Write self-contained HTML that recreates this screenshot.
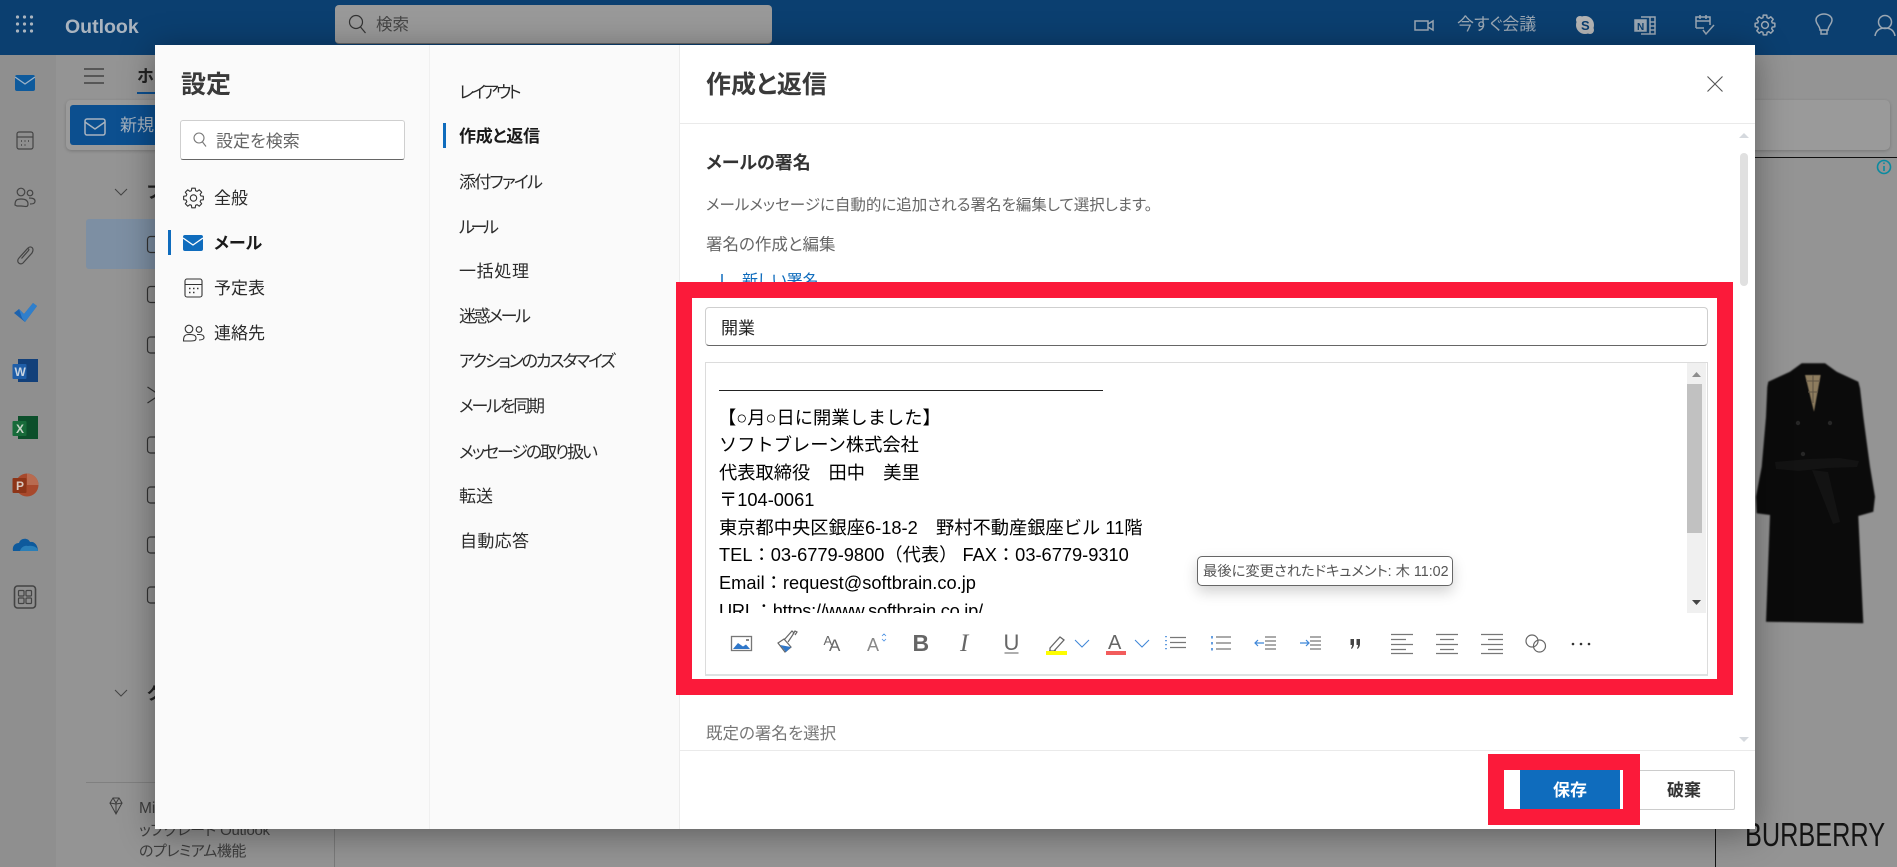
<!DOCTYPE html>
<html lang="ja"><head><meta charset="utf-8"><title>Outlook 設定</title>
<style>
html,body{margin:0;padding:0;width:1897px;height:867px;overflow:hidden;background:#949494}
body{position:relative;font-family:"Liberation Sans","Noto Sans CJK JP",sans-serif;font-feature-settings:"palt";-webkit-font-smoothing:antialiased}
.a{position:absolute}
.t{position:absolute;white-space:nowrap;line-height:24px;margin-top:1px}
svg{position:absolute;left:0;top:0}
.l1{font-size:17px;color:#2b2b2b;left:214px}
.e{position:absolute;left:0;white-space:nowrap;font-size:18.25px;line-height:24px;color:#000;font-feature-settings:normal;margin-top:1px}
.n{font-size:17px;fill:#2b2b2b}
.nb{font-size:17px;fill:#1a1a1a;font-weight:bold}
</style></head><body>

<!-- dimmed background app -->
<div class="a" style="left:0;top:0;width:1897px;height:55px;background:#0b3f70"></div>
<div class="a" style="left:0;top:55px;width:56px;height:812px;background:#8f8f8f"></div>
<div class="a" style="left:334px;top:55px;width:1px;height:812px;background:#7a7a7a"></div>
<div class="a" style="left:335px;top:5px;width:437px;height:39px;background:#999;border-radius:4px;border-bottom:1px solid #666;box-sizing:border-box"></div>
<div class="t" style="left:376px;top:12px;font-size:16.5px;color:#454545">検索</div>
<div class="t" style="left:65px;top:14px;font-size:19.5px;font-weight:bold;color:#aab4bf">Outlook</div>
<div class="t" style="left:1457px;top:12px;font-size:17px;color:#9ba7b3">今すぐ会議</div>
<div class="a" style="left:66px;top:100px;width:1824px;height:50px;background:#9a9a9a;border-radius:5px;box-shadow:0 1px 3px rgba(0,0,0,.2)"></div>
<div class="a" style="left:70px;top:105px;width:100px;height:40px;background:#0c4f8f;border-radius:3px"></div>
<div class="t" style="left:120px;top:113px;font-size:17px;color:#a9b4c0">新規</div>
<div class="t" style="left:137px;top:64px;font-size:17px;font-weight:bold;color:#222;">ホーム</div>
<div class="a" style="left:137px;top:92px;width:40px;height:2px;background:#0c4f8f"></div>
<div class="t" style="left:147px;top:180px;font-size:17px;font-weight:bold;color:#222">フォルダー</div>
<div class="t" style="left:147px;top:681px;font-size:17px;font-weight:bold;color:#222">グループ</div>
<div class="a" style="left:86px;top:219px;width:100px;height:50px;background:#7d8fa3;border-radius:3px"></div>
<div class="a" style="left:86px;top:782px;width:248px;height:1px;background:#808080"></div>
<div class="t" style="left:139px;top:796px;font-size:15.5px;color:#3d3d3d">Microsoft 365 にア</div>
<div class="t" style="left:139px;top:818px;font-size:15px;letter-spacing:-.3px;color:#3d3d3d">ップグレード Outlook</div>
<div class="t" style="left:139px;top:839px;font-size:15px;letter-spacing:-.5px;color:#3d3d3d">のプレミアム機能</div>
<div class="a" style="left:1755px;top:157px;width:142px;height:1px;background:#111"></div>
<div class="a" style="left:1715px;top:800px;width:1px;height:67px;background:#111"></div>
<div class="t" style="left:1745px;top:818px;margin:0;font-family:'Liberation Sans',sans-serif;font-size:33.5px;line-height:36px;color:#141414;transform:scaleX(.755);transform-origin:0 0">BURBERRY</div>

<svg width="1897" height="867" viewBox="0 0 1897 867" fill="none">
 <!-- app launcher -->
 <g fill="#aab4bf"><circle cx="17.5" cy="17" r="1.6"/><circle cx="24.5" cy="17" r="1.6"/><circle cx="31.5" cy="17" r="1.6"/><circle cx="17.5" cy="24" r="1.6"/><circle cx="24.5" cy="24" r="1.6"/><circle cx="31.5" cy="24" r="1.6"/><circle cx="17.5" cy="31" r="1.6"/><circle cx="24.5" cy="31" r="1.6"/><circle cx="31.5" cy="31" r="1.6"/></g>
 <!-- search -->
 <circle cx="356" cy="22" r="6.5" stroke="#333" stroke-width="1.2"/><path d="M360.5 27l5 6" stroke="#333" stroke-width="1.2"/>
 <!-- top right icons -->
 <g stroke="#9ba7b3" stroke-width="1.5">
  <rect x="1415" y="21" width="13" height="9"/><path d="M1428 24l5-3v9l-5-3"/>
  <path d="M1641 17h14v17h-14M1650 17v17M1650 22h5M1650 26h5M1650 30h5"/>
  <rect x="1635" y="20" width="11" height="11" fill="#9ba7b3"/>
  <path d="M1696 28v-11h14v8M1696 28h8M1700 15v4M1706 15v4M1696 21h14M1703 30l3 4 8-9"/>
  <circle cx="1765" cy="25" r="3.4"/>
  <path transform="translate(1765 25)" d="M-2.09-7.31L-1.74-9.85H1.74L2.09-7.31L3.68-6.65L5.74-8.19L8.19-5.74L6.65-3.68L7.31-2.09L9.85-1.74V1.74L7.31 2.09L6.65 3.68L8.19 5.74L5.74 8.19L3.68 6.65L2.09 7.31L1.74 9.85H-1.74L-2.09 7.31L-3.68 6.65L-5.74 8.19L-8.19 5.74L-6.65 3.68L-7.31 2.09L-9.85 1.74V-1.74L-7.31-2.09L-6.65-3.68L-8.19-5.74L-5.74-8.19L-3.68-6.65Z" stroke-linejoin="round"/>
  <path d="M1820 30c0-4-4-6-4-10a8 6 0 0 1 16 0c0 4-4 6-4 10zM1821 30v4h6v-4"/>
  <circle cx="1885" cy="22" r="6.5"/><path d="M1875 36c1-6 5-8 10-8s9 2 10 8"/>
 </g>
 <circle cx="1585" cy="25" r="9" fill="#b4b4b4"/><circle cx="1580" cy="20" r="4" fill="#b4b4b4"/><circle cx="1590" cy="30" r="4" fill="#b4b4b4"/>
 <text x="1581" y="30" font-size="13" font-weight="bold" fill="#0b3f70" font-family="Liberation Sans">S</text>
 <text x="1637" y="30" font-size="10" font-weight="bold" fill="#0b3f70" font-family="Liberation Sans">N</text>

 <!-- rail -->
 <rect x="15" y="75" width="20" height="16" rx="2" fill="#0e5a9c"/><path d="M15 77l10 7 10-7" stroke="#9db3c8" stroke-width="1.3"/>
 <g stroke="#444" stroke-width="1.2">
  <rect x="17" y="132" width="16" height="17" rx="2"/><path d="M17 137h16"/>
  <path d="M21 141h1M24.5 141h1M28 141h1M21 145h1M24.5 145h1" stroke-width="1.6"/>
  <circle cx="21" cy="192" r="3.8"/><circle cx="30" cy="193" r="2.8"/><path d="M15 205c0-5 2-6 6-6s7 1 7 5-3 2-7 2h-4zM29 198c4 0 6 1 6 3 0 3-3 3-5 3"/>
  <path d="M19 258l9-10c2-2 5-1 5 2 0 1-.5 2-1 3l-9 10c-1.500 1.500-4 1-5-1-.5-1.500 0-3 1-4l8-9c1-1 2.500 0 1.500 1.500l-7 8"/>
  <rect x="14.500" y="586" width="21" height="22" rx="3" stroke-width="1.6"/>
  <rect x="18.500" y="590.500" width="5.500" height="5.500" rx="1"/><rect x="26" y="590.500" width="5.500" height="5.500" rx="1"/><rect x="18.500" y="598" width="5.500" height="5.500" rx="1"/><rect x="26" y="598" width="5.500" height="5.500" rx="1"/>
 </g>
 <path d="M14 313l5-4 5 5 9-11 4 3-12 16z" fill="#1d62ad"/><path d="M19 309l5 5 9-11 4 3-12 16-3-4z" fill="#2f7fcc"/>
 <rect x="18" y="359" width="20" height="23" fill="#12407a"/><rect x="12.500" y="364" width="14" height="15" rx="1" fill="#1f5ea8"/><text x="14.500" y="376" font-size="12" font-weight="bold" fill="#c8d4e0" font-family="Liberation Sans">W</text>
 <rect x="18" y="416" width="20" height="23" fill="#0c4f2b"/><rect x="12.500" y="421" width="14" height="15" rx="1" fill="#176b3a"/><text x="16" y="433" font-size="12" font-weight="bold" fill="#c8d4c8" font-family="Liberation Sans">X</text>
 <circle cx="27" cy="485" r="11.500" fill="#a8492c"/><path d="M27 485v-11.500a11.500 11.500 0 0 1 11.500 11.500z" fill="#b86b50"/><rect x="12.500" y="478" width="14" height="15" rx="1" fill="#8d3518"/><text x="16" y="490" font-size="12" font-weight="bold" fill="#d8c8c0" font-family="Liberation Sans">P</text>
 <path d="M13 551c-1-6 3-8 6-8 1-5 9-6 11-1 4-1 8 3 8 9z" fill="#0e5a9c"/><path d="M20 551c1-4 5-6 8-5 4-1 10 1 10 5z" fill="#2a7fb8"/>

 <!-- nav -->
 <path d="M84 69h20M84 76h20M84 83h20" stroke="#333" stroke-width="1.200"/>
 <rect x="85" y="119" width="20" height="16" rx="2" stroke="#a9b4c0" stroke-width="1.500"/><path d="M85 122l10 7 10-7" stroke="#a9b4c0" stroke-width="1.500"/>
 <path d="M115 189l6 6 6-6M115 690l6 6 6-6" stroke="#444" stroke-width="1"/>
 <path d="M116 803l-6-1 3-5h6l3 5-6 1zM110 802l6 11 6-11M116 803v10M113 797l3 5 3-5" stroke="#3d3d3d" stroke-width="1" transform="translate(0 1)"/>
 <g stroke="#333" stroke-width="1.200">
  <rect x="147.500" y="236.500" width="20" height="16" rx="3"/><rect x="147.500" y="286.500" width="20" height="16" rx="3"/><rect x="147.500" y="337" width="20" height="16" rx="3"/><path d="M147.500 387l12 8-12 8"/><rect x="147.500" y="437" width="20" height="16" rx="3"/><rect x="147.500" y="487" width="20" height="16" rx="3"/><rect x="147.500" y="537" width="20" height="16" rx="3"/><rect x="147.500" y="587" width="20" height="16" rx="3"/>
 </g>
 <!-- info + coat (outside modal) -->
 <circle cx="1884" cy="167" r="6.500" stroke="#0a8aa0" stroke-width="1.600"/><path d="M1884 166v5M1884 162.500v1.500" stroke="#0a8aa0" stroke-width="1.600"/>
 <path d="M1790 371.700L1801.700 363.300L1825 363.300L1836.700 371.700L1858.300 381.700L1860 388.300L1863.300 416.700L1870 466.700L1875 496.700L1873.300 511.700L1858.300 516L1863.300 623.300L1766 621.700L1770 515L1756.700 513.300L1756 496.700L1761.700 466.700L1766 416.700L1767.300 386.700L1768.300 381.700Z" fill="#0b0b0b" style="filter:blur(.8px)"/>
 <path d="M1805 375h15.700l-6.700 36.700z" fill="#8d7c5e" style="filter:blur(.5px)"/>
 <path d="M1806 381h14M1808 392h10M1813 375v28" stroke="#5f5444" stroke-width="1"/>
 <path d="M1775 462l34-3 30-1 20 3-2 6-30 1-28 3-23-2zM1812 470l16 2 12 50-7 2z" fill="#131313"/>
 <g fill="#262626"><circle cx="1798" cy="423" r="2.200"/><circle cx="1830" cy="423" r="2.200"/><circle cx="1803" cy="454" r="2.200"/></g>
</svg>

<!-- modal -->
<div class="a" style="left:155px;top:45px;width:1600px;height:784px;background:#fff;box-shadow:0 5px 32px rgba(0,0,0,.38)"></div>
<div class="a" style="left:155px;top:45px;width:525px;height:784px;background:#fafafa"></div>
<div class="a" style="left:429px;top:45px;width:1px;height:784px;background:#f0f0f0"></div>
<div class="a" style="left:679px;top:45px;width:1px;height:784px;background:#ececec"></div>
<div class="a" style="left:680px;top:123px;width:1075px;height:1px;background:#eaeaea"></div>
<div class="a" style="left:680px;top:750px;width:1075px;height:1px;background:#eaeaea"></div>

<!-- col 1 -->
<div class="t" style="left:181px;top:72px;font-size:25px;font-weight:bold;color:#3a3a3a;">設定</div>
<div class="a" style="left:180px;top:120px;width:225px;height:40px;box-sizing:border-box;background:#fff;border:1px solid #cfcfcf;border-bottom:1px solid #666;border-radius:3px"></div>
<div class="t" style="left:216px;top:129px;font-size:17px;color:#666">設定を検索</div>
<div class="t l1" style="top:186px">全般</div>
<div class="t l1" style="top:231px;font-weight:bold;color:#1a1a1a">メール</div>
<div class="t l1" style="top:276px">予定表</div>
<div class="t l1" style="top:321px">連絡先</div>
<div class="a" style="left:168px;top:230px;width:3px;height:25px;background:#0f6cbd"></div>

<!-- col 2 -->
<div class="a" style="left:443px;top:123px;width:3px;height:25px;background:#0f6cbd"></div>
<svg width="1897" height="867" viewBox="0 0 1897 867">
 <text class="n" x="459" y="98" textLength="62.500">レイアウト</text>
 <text class="nb" x="459" y="142" textLength="81">作成と返信</text>
 <text class="n" x="459" y="188" textLength="84">添付ファイル</text>
 <text class="n" x="459" y="233" textLength="40">ルール</text>
 <text class="n" x="459" y="277" textLength="70">一括処理</text>
 <text class="n" x="459" y="322" textLength="72">迷惑メール</text>
 <text class="n" x="459" y="367" textLength="157">アクションのカスタマイズ</text>
 <text class="n" x="459" y="412" textLength="86">メールを同期</text>
 <text class="n" x="459" y="458" textLength="139">メッセージの取り扱い</text>
 <text class="n" x="459" y="502" textLength="34">転送</text>
 <text class="n" x="460" y="547" textLength="69">自動応答</text>
</svg>

<!-- right pane -->
<div class="t" style="left:706px;top:72px;font-size:25px;font-weight:bold;color:#3a3a3a">作成と返信</div>
<div class="t" style="left:706px;top:150px;font-size:18px;font-weight:bold;color:#333">メールの署名</div>
<div class="t" style="left:706px;top:193px;font-size:15.500px;color:#666">メールメッセージに自動的に追加される署名を編集して選択します。</div>
<div class="t" style="left:706px;top:232px;font-size:16.500px;color:#666">署名の作成と編集</div>
<div class="t" style="left:742px;top:269px;font-size:16px;color:#0f6cbd">新しい署名</div>
<div class="t" style="left:706px;top:721px;font-size:16.500px;color:#777">既定の署名を選択</div>

<!-- red big box -->
<div class="a" style="left:676px;top:282px;width:1057px;height:413px;box-sizing:border-box;background:#fff;border:16px solid #fb1a3a"></div>
<!-- name input -->
<div class="a" style="left:705px;top:307px;width:1003px;height:39px;box-sizing:border-box;border:1px solid #cfcfcf;border-bottom:1px solid #666;border-radius:4px;background:#fff"></div>
<div class="t" style="left:721px;top:316px;font-size:17px;color:#222">開業</div>
<!-- editor -->
<div class="a" style="left:705px;top:362px;width:1003px;height:314px;box-sizing:border-box;border:1px solid #dcdcdc;border-bottom:2px solid #dde2e2;background:#fff"></div>
<div class="a" style="left:1687px;top:363px;width:19px;height:250px;background:#f0f0f0"></div>
<div class="a" style="left:1687px;top:384px;width:15px;height:149px;background:#c1c1c1"></div>
<div class="a" style="left:719px;top:363px;width:950px;height:250px;overflow:hidden">
 <div class="a" style="left:0;top:27px;width:384px;height:1px;background:#222"></div>
 <div class="e" style="top:42px;left:-1px">【○月○日に開業しました】</div>
 <div class="e" style="top:69px">ソフトブレーン株式会社</div>
 <div class="e" style="top:97px">代表取締役　田中　美里</div>
 <div class="e" style="top:124px">〒104-0061</div>
 <div class="e" style="top:152px">東京都中央区銀座6-18-2　野村不動産銀座ビル 11階</div>
 <div class="e" style="top:179px">TEL：03-6779-9800（代表） FAX：03-6779-9310</div>
 <div class="e" style="top:207px">Email：request@softbrain.co.jp</div>
 <div class="e" style="top:235px;letter-spacing:-.25px">URL：https://www.softbrain.co.jp/</div>
</div>
<!-- tooltip -->
<div class="a" style="left:1197px;top:556px;width:256px;height:30px;box-sizing:border-box;background:#fff;border:1px solid #666;border-radius:5px;box-shadow:0 6px 14px rgba(0,0,0,.18)"></div>
<div class="t" style="left:1203px;top:559px;font-size:14.300px;color:#555">最後に変更されたドキュメント: 木 11:02</div>

<!-- red save box -->
<div class="a" style="left:1488px;top:754px;width:152px;height:71px;background:#fb1a3a"></div>
<div class="a" style="left:1504px;top:770px;width:119px;height:39px;background:#fff"></div>
<div class="a" style="left:1520px;top:770px;width:100px;height:39px;background:#0f6cbd"></div>
<div class="t" style="left:1553px;top:778px;font-size:17px;font-weight:bold;color:#fff">保存</div>
<div class="a" style="left:1640px;top:770px;width:95px;height:40px;box-sizing:border-box;border:1px solid #ccc;border-left:none;border-radius:0 2px 2px 0;background:#fff"></div>
<div class="t" style="left:1667px;top:778px;font-size:17px;font-weight:bold;color:#333">破棄</div>

<!-- modal icons -->
<svg width="1897" height="867" viewBox="0 0 1897 867" fill="none">
 <!-- search settings -->
 <circle cx="199" cy="138" r="5" stroke="#777" stroke-width="1.100"/><path d="M202.500 142l3.500 4.500" stroke="#777" stroke-width="1.100"/>
 <!-- gear general -->
 <g stroke="#333" stroke-width="1.100">
  <circle cx="193.500" cy="198" r="3.200"/>
  <path transform="translate(193.500 198)" d="M-2.09-7.31L-1.74-9.85H1.74L2.09-7.31L3.68-6.65L5.74-8.19L8.19-5.74L6.65-3.68L7.31-2.09L9.85-1.74V1.74L7.31 2.09L6.65 3.68L8.19 5.74L5.74 8.19L3.68 6.65L2.09 7.31L1.74 9.85H-1.74L-2.09 7.31L-3.68 6.65L-5.74 8.19L-8.19 5.74L-6.65 3.68L-7.31 2.09L-9.85 1.74V-1.74L-7.31-2.09L-6.65-3.68L-8.19-5.74L-5.74-8.19L-3.68-6.65Z" stroke-linejoin="round"/>
  <rect x="185" y="279" width="17" height="18" rx="2"/><path d="M185 284.500h17"/>
  <path d="M189 288.500h1.500M193 288.500h1.500M197 288.500h1.500M189 292.500h1.500M193 292.500h1.500" stroke-width="1.500"/>
  <circle cx="189" cy="329" r="3.800"/><circle cx="199" cy="329.500" r="2.800"/><path d="M183.500 341c0-5 1.500-6.500 5.500-6.500s7 .5 7 3.500-2 3-7 3zM197 334.500h2c4 0 5 1.500 5 3s-2 2.500-5 2.500"/>
 </g>
 <rect x="183" y="235" width="20" height="16" rx="2" fill="#0f6cbd"/><path d="M183 238l10 7 10-7" stroke="#fff" stroke-width="1.300"/>
 <!-- close -->
 <path d="M1707.500 76.500l15 15M1722.500 76.500l-15 15" stroke="#555" stroke-width="1.100"/>
 <!-- outer scrollbar -->
 <path d="M1739 138l5-5 5 5z" fill="#d5d9de"/><path d="M1739 737l5 5 5-5z" fill="#d5d9de"/>
 <rect x="1740" y="153" width="8" height="133" rx="4" fill="#e0e0e0"/>
 <!-- plus new sig -->
 <path d="M722 274v8" stroke="#0f6cbd" stroke-width="1.500"/>
 <!-- editor scroll arrows -->
 <path d="M1692 377l4.500-5 4.500 5z" fill="#8e8e8e"/><path d="M1692 600l4.500 5 4.500-5z" fill="#444"/>
 <!-- toolbar -->
 <rect x="731.500" y="636.500" width="20" height="14" stroke="#777" stroke-width="1.300"/>
 <path d="M733 649l5-6 5 3.500 3-2 4 4.500z" fill="#2f77c9"/>
 <path d="M746 639h3v2h-3z" fill="#888"/>
 <g stroke="#666" stroke-width="1.200">
  <path d="M778 643l7 9 6-5-7-8zM784 640l8-9 2 2-6 9"/><path d="M793 634l2-3 2 1-2 3"/>
 </g>
 <path d="M780 645l11 2-5 5z" fill="#2f77c9"/>
 <g font-family="Liberation Sans" fill="#666">
  <text x="823.500" y="645" font-size="13">A</text><text x="829" y="651" font-size="17">A</text>
  <text x="867" y="651" font-size="18" fill="#888">A</text>
  <text x="912.500" y="651" font-size="23" font-weight="bold">B</text>
  <text x="960" y="651" font-size="25" font-style="italic" font-family="Liberation Serif">I</text>
  <text x="1003.500" y="650" font-size="22">U</text>
  <text x="1108" y="649" font-size="20">A</text>
 </g>
 <path d="M882 636l2-2 2 2M882 639l2 2 2-2" stroke="#4a90e2" stroke-width=".8"/>
 <path d="M1004.500 653h14" stroke="#777" stroke-width="1.200"/>
 <path d="M1050 648l10-11 4 3-10 11h-4zM1049 651h7" stroke="#666" stroke-width="1.300"/>
 <rect x="1046" y="651" width="21" height="4" fill="#fdfd00"/>
 <rect x="1106" y="651" width="20" height="4" fill="#f25c5c"/>
 <path d="M1075 640l7 7 7-7M1135 640l7 7 7-7" stroke="#3f86d8" stroke-width="1"/>
 <g stroke="#777" stroke-width="1.300">
  <path d="M1170 637.500h16M1170 642.500h16M1170 647.500h16"/>
  <path d="M1216 637h15M1216 643h15M1216 649h15"/>
  <path d="M1265 637h11M1265 641h11M1265 645h11M1265 649h11"/>
  <path d="M1310 637h11M1310 641h11M1310 645h11M1310 649h11"/>
  <path d="M1391 635h22M1391 640h15M1391 645h22M1391 650h15M1391 654h22" transform="translate(0 -.5)"/>
  <path d="M1436 635h22M1440 640h14M1436 645h22M1440 650h14M1436 654h22" transform="translate(0 -.5)"/>
  <path d="M1481 635h22M1488 640h15M1481 645h22M1488 650h15M1481 654h22" transform="translate(0 -.5)"/>
 </g>
 <path d="M1166 636v1.300M1166 640v1.300M1166 644v1.300M1166 648v1.300M1212 636v2.500M1212 642v2.500M1212 648v2.500" stroke="#3f86d8" stroke-width="1.600"/>
 <path d="M1264 643h-9M1258 640l-3 3 3 3M1300 643h9M1306 640l3 3-3 3" stroke="#3f86d8" stroke-width="1.200"/>
 <path d="M1350.500 639h3.500v5c0 2-1 4-2.500 5l-.5-1c.8-.8 1-1.700 1-3h-1.500zM1356.500 639h3.500v5c0 2-1 4-2.500 5l-.5-1c.8-.8 1-1.700 1-3h-1.500z" fill="#444"/>
 <circle cx="1532" cy="641" r="6" stroke="#666" stroke-width="1.200"/><circle cx="1539.500" cy="646" r="6" stroke="#666" stroke-width="1.200"/>
 <g fill="#333"><circle cx="1573" cy="644" r="1.300"/><circle cx="1581" cy="644" r="1.300"/><circle cx="1589" cy="644" r="1.300"/></g>
</svg>
</body></html>
